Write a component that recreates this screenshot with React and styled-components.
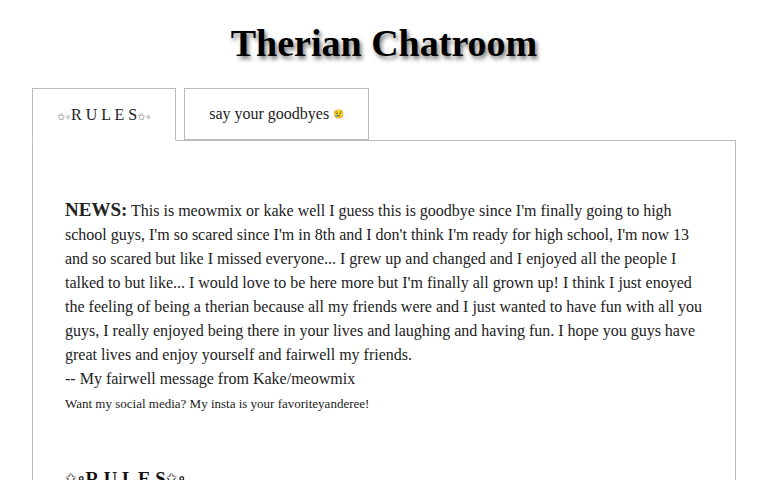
import React, { useState } from 'react';
import styled, { createGlobalStyle } from 'styled-components';

const GlobalStyle = createGlobalStyle`
  body {
    margin: 0;
    background: #fff;
    font-family: "Liberation Serif", "Times New Roman", serif;
    color: #222;
  }
`;

const Page = styled.div`
  padding: 0 32px;
`;

const Title = styled.h1`
  margin: 0;
  padding: 20px 0 22px;
  text-align: center;
  font-size: 38px;
  line-height: 46px;
  font-weight: 700;
  color: #000;
  text-shadow: 2px 3px 4px rgba(0, 0, 0, 0.55);
`;

const TabBar = styled.div`
  display: flex;
  gap: 8px;
  position: relative;
  z-index: 1;
`;

const Tab = styled.button`
  font-family: inherit;
  font-size: 16px;
  color: #222;
  background: #fff;
  border: 1px solid #bbb;
  border-bottom: ${({ $active }) => ($active ? '1px solid #fff' : '1px solid #bbb')};
  margin-bottom: ${({ $active }) => ($active ? '-1px' : '0')};
  height: ${({ $active }) => ($active ? '53px' : '52px')};
  padding: 0 24px;
  cursor: pointer;
`;

const Emoji = styled.span`
  font-size: 9px;
  vertical-align: 2px;
`;

const Sparkle = styled.span`
  font-family: "DejaVu Sans", sans-serif;
  font-size: ${({ $big }) => ($big ? '0.75em' : '0.6em')};
  color: ${({ $muted }) => ($muted ? '#777' : '#000')};
  vertical-align: ${({ $big }) => ($big ? '2px' : '0')};
`;

const Panel = styled.section`
  border: 1px solid #bbb;
  padding: 57px 32px 40px;
`;

const Paragraph = styled.p`
  margin: 0;
  font-size: 16px;
  line-height: 24px;
`;

const News = styled.strong`
  font-size: 19px;
`;

const Small = styled.p`
  margin: 0;
  font-size: 13px;
  line-height: 26px;
`;

const RulesHeading = styled.h3`
  margin: 48px 0 0;
  font-size: 18.72px;
  line-height: 26px;
  color: #111;
`;

const Decorated = ({ muted, big }) => (
  <>
    <Sparkle $muted={muted} $big={big}>✩∘</Sparkle>R U L E S
    <Sparkle $muted={muted} $big={big}>✩∘</Sparkle>
  </>
);

export default function App() {
  const [tab, setTab] = useState(0);
  return (
    <Page>
      <GlobalStyle />
      <Title>Therian Chatroom</Title>
      <TabBar>
        <Tab $active={tab === 0} onClick={() => setTab(0)}>
          <Decorated muted />
        </Tab>
        <Tab $active={tab === 1} onClick={() => setTab(1)}>
          say your goodbyes <Emoji>{'\u{1F622}'}</Emoji>
        </Tab>
      </TabBar>
      <Panel>
        <Paragraph>
          <News>NEWS:</News> This is meowmix or kake well I guess this is goodbye since
          I'm finally going to high school guys, I'm so scared since I'm in 8th and I
          don't think I'm ready for high school, I'm now 13 and so scared but like I
          missed everyone... I grew up and changed and I enjoyed all the people I
          talked to but like... I would love to be here more but I'm finally all grown
          up! I think I just enoyed the feeling of being a therian because all my
          friends were and I just wanted to have fun with all you guys, I really
          enjoyed being there in your lives and laughing and having fun. I hope you
          guys have great lives and enjoy yourself and fairwell my friends.
          <br />
          -- My fairwell message from Kake/meowmix
        </Paragraph>
        <Small>Want my social media? My insta is your favoriteyanderee!</Small>
        <RulesHeading>
          <Decorated big />
        </RulesHeading>
      </Panel>
    </Page>
  );
}
